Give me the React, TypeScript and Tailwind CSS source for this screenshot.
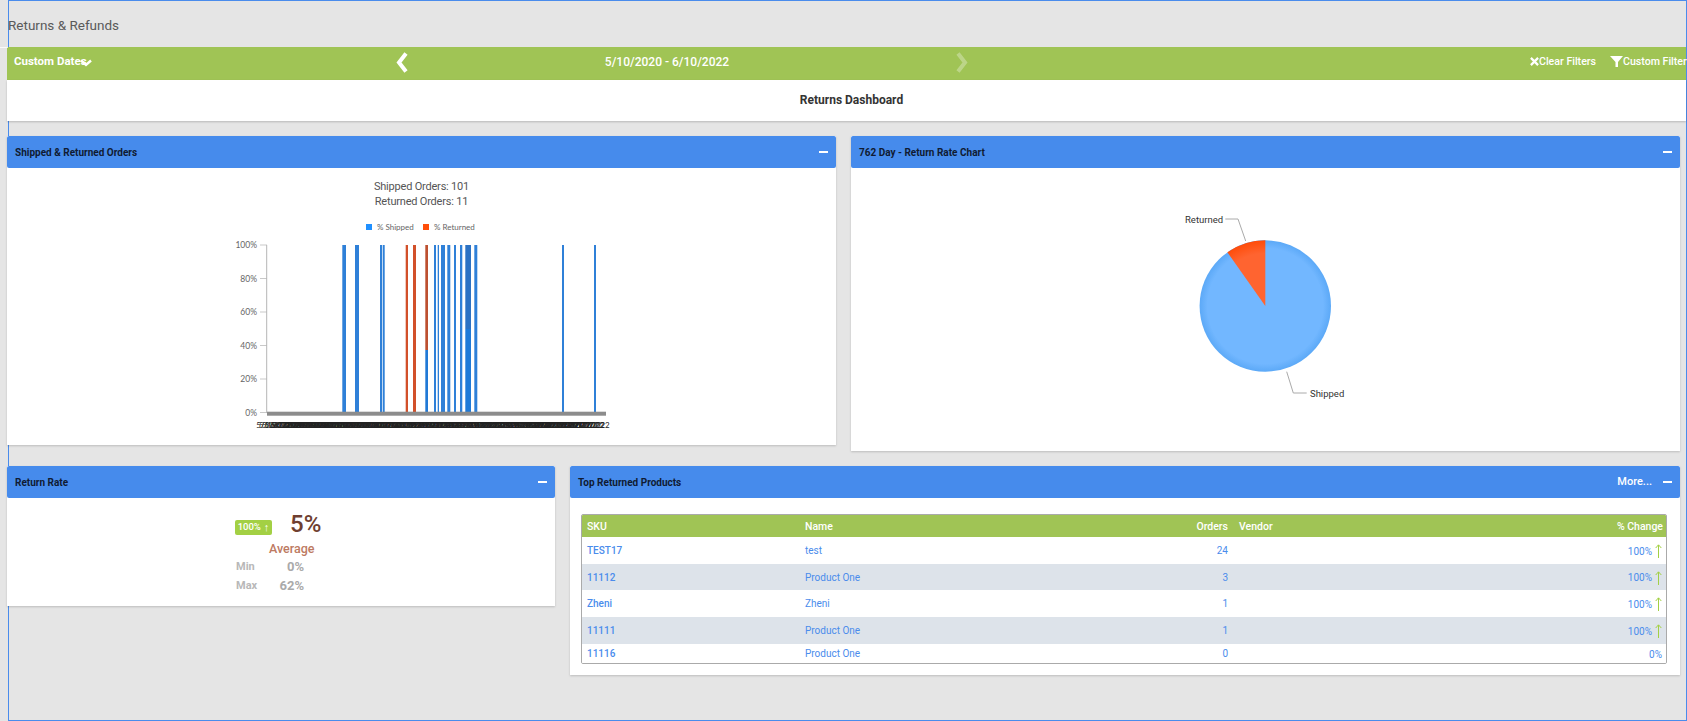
import React from 'react';

const font = { fontFamily: 'Roboto, "Liberation Sans", sans-serif' };

const shippedBars = [
    [342.3, 3.7], [355, 4], [380, 2.3], [383, 1.7], [434, 2], [437.7, 1.3], [441, 4], [447.3, 3],
    [454, 2], [460, 2.3], [474.3, 3], [562, 2], [594, 2],
];
const returnedBars = [[405.7, 2.3], [413, 3]];

const startDate = new Date(2020, 4, 10);
const axisLabels = Array.from({ length: 110 }, (_, i) => {
    const d = new Date(startDate.getTime() + i * 7 * 86400000);
    return { x: 276 + i * 2.88, label: `${d.getMonth() + 1}/${d.getDate()}/${d.getFullYear()}` };
});

const rows = [
    { sku: 'TEST17', name: 'test', orders: 24, change: '100%', up: true, h: 'h-[27px]', bg: 'bg-white' },
    { sku: '11112', name: 'Product One', orders: 3, change: '100%', up: true, h: 'h-[26px]', bg: 'bg-[#dde3ea]' },
    { sku: 'Zheni', name: 'Zheni', orders: 1, change: '100%', up: true, h: 'h-[27px]', bg: 'bg-white' },
    { sku: '11111', name: 'Product One', orders: 1, change: '100%', up: true, h: 'h-[27px]', bg: 'bg-[#dde3ea]' },
    { sku: '11116', name: 'Product One', orders: 0, change: '0%', up: false, h: 'h-[19px]', bg: 'bg-white' },
];

const Chevron = ({ flip, faded }: { flip?: boolean; faded?: boolean }) => (
    <svg width="12" height="21" viewBox="0 0 12 21" className={`shrink-0 ${flip ? 'rotate-180' : ''} ${faded ? 'opacity-30' : ''}`}>
        <path d="M10 1.5 L3 10.5 L10 19.5" fill="none" stroke="#fff" strokeWidth="4" />
    </svg>
);

const UpArrow = () => (
    <svg width="7" height="14" viewBox="0 0 7 14" className="shrink-0">
        <path d="M3.5 14 V1 M0.7 4 L3.5 0.8 L6.3 4" fill="none" stroke="#a3d044" strokeWidth="1" />
    </svg>
);

const PanelHeader = ({ title, more }: { title: string; more?: boolean }) => (
    <div className="flex h-[32px] items-center rounded-[2px] bg-[#468bec] pl-[8px] pr-[8px]">
        <span className="text-[10px] font-bold text-[#101b33]">{title}</span>
        {more && <span className="ml-auto mr-[11px] text-[11px] font-medium text-white">More...</span>}
        <span className={`h-[2px] w-[9px] bg-white ${more ? '' : 'ml-auto'}`} />
    </div>
);

const Panel = ({ title, more, className, children }: { title: string; more?: boolean; className: string; children?: React.ReactNode }) => (
    <section className={`bg-white shadow-[0_1px_2px_rgba(0,0,0,0.18)] ${className}`}>
        <PanelHeader title={title} more={more} />
        {children}
    </section>
);

const BarChart = () => (
    <svg viewBox="7 231 829 200" width="829" height="200" className="block">
        {[100, 80, 60, 40, 20, 0].map((p, i) => {
            const y = 245 + i * 33.5;
            return (
                <g key={p}>
                    <text x="257" y={y + 3} textAnchor="end" fontSize="8.5" fill="#666" fontFamily="Lato, sans-serif">{p}%</text>
                    <line x1="260" x2="267" y1={y} y2={y} stroke="#bbb" strokeWidth="0.8" />
                </g>
            );
        })}
        <line x1="266.7" x2="266.7" y1="245" y2="413" stroke="#b5b5b5" strokeWidth="1" />
        {shippedBars.map(([x, w]) => (
            <rect key={x} x={x} y="245" width={w} height="168" fill="#2f80d8" />
        ))}
        {returnedBars.map(([x, w]) => (
            <rect key={x} x={x} y="245" width={w} height="168" fill="#d2502a" />
        ))}
        <rect x="425.3" y="245" width="2.7" height="105" fill="#bd5030" />
        <rect x="425.3" y="350" width="2.7" height="63" fill="#2179d6" />
        <rect x="465.3" y="245" width="5.7" height="84" fill="#2c72c4" />
        <rect x="465.3" y="329" width="5.7" height="84" fill="#1f7ad8" />
        <rect x="267" y="411.7" width="339" height="4" fill="#8c8c8c" />
        {axisLabels.map((t) => (
            <text key={t.x} x={t.x} y="428" textAnchor="middle" fontSize="8" fill="#222" fontFamily="Lato, sans-serif">
                {t.label}
            </text>
        ))}
    </svg>
);

const PieChart = () => (
    <svg viewBox="851 168 829 283" width="829" height="283" className="block">
        <defs>
            <radialGradient id="pieBlue" gradientUnits="userSpaceOnUse" cx="1265.3" cy="306" r="65.7">
                <stop offset="0.88" stopColor="#72b7ff" />
                <stop offset="1" stopColor="#5ca9f7" />
            </radialGradient>
            <radialGradient id="pieRed" gradientUnits="userSpaceOnUse" cx="1265.3" cy="306" r="65.7">
                <stop offset="0.8" stopColor="#ff6430" />
                <stop offset="1" stopColor="#ff4c0a" />
            </radialGradient>
        </defs>
        <circle cx="1265.3" cy="306" r="65.7" fill="url(#pieBlue)" />
        <path d="M1265.3 306 L1265.3 240.3 A65.7 65.7 0 0 0 1227.4 252.3 Z" fill="url(#pieRed)" />
        <path d="M1225.3 219 H1238 L1245.7 241" fill="none" stroke="#aaa" strokeWidth="1" />
        <path d="M1286.7 371.7 L1293.3 393 H1306.7" fill="none" stroke="#aaa" strokeWidth="1" />
        <text x="1185" y="223" fontSize="9.5" fill="#333" fontFamily="Roboto, sans-serif">Returned</text>
        <text x="1310" y="397" fontSize="9.5" fill="#333" fontFamily="Roboto, sans-serif">Shipped</text>
    </svg>
);

const ReturnRate = () => (
    <div className="h-[108px]">
        <div className="flex items-start pl-[228px] pt-[22px]">
            <span className="flex h-[15px] w-[37px] items-center justify-center gap-[3px] rounded-[2px] bg-[#a3d044] text-[9.5px] font-medium text-white">
                100% <span className="text-[11px] leading-[11px]">↑</span>
            </span>
            <span className="ml-[18px] -mt-[10px] text-[24px] font-medium leading-[28px] text-[#6f3f30]">5%</span>
        </div>
        <div className="mt-[3px] pl-[262px] text-[12.5px] font-medium leading-[16px] text-[#bd7a62]">Average</div>
        <div className="grid w-[297px] grid-cols-[1fr_auto] items-center pl-[229px] text-[#aaa]">
            <span className="text-[11px] font-bold leading-[19px] text-[#b8b8b8]">Min</span>
            <span className="text-right text-[13px] font-bold leading-[19px]">0%</span>
            <span className="text-[11px] font-bold leading-[19px] text-[#b8b8b8]">Max</span>
            <span className="text-right text-[13px] font-bold leading-[19px]">62%</span>
        </div>
    </div>
);

const ProductsTable = () => (
    <div className="ml-[11px] mt-[16px] w-[1086px] overflow-hidden rounded-[2px] border border-[#aaaaaa] text-[10px] text-[#4a8cec]">
        <div className="grid h-[22px] grid-cols-[217px_371px_64px_1fr_166px] items-center bg-[#a0c455] pt-[2px] text-[10.5px] font-medium text-white">
            <span className="pl-[5px]">SKU</span>
            <span className="pl-[6px]">Name</span>
            <span className="pr-[6px] text-right">Orders</span>
            <span className="pl-[5px]">Vendor</span>
            <span className="pr-[3px] text-right">% Change</span>
        </div>
        {rows.map((r) => (
            <div key={r.sku} className={`grid grid-cols-[217px_371px_64px_1fr_166px] items-center ${r.h} ${r.bg}`}>
                <span className="pl-[5px] font-medium">{r.sku}</span>
                <span className="pl-[6px]">{r.name}</span>
                <span className="pr-[6px] text-right">{r.orders}</span>
                <span />
                <span className="flex items-center justify-end gap-[3px] pr-[4px] pt-[1px]">
                    {r.change}
                    {r.up && <UpArrow />}
                </span>
            </div>
        ))}
    </div>
);

export default function App() {
    return (
        <div className="flex h-[721px] w-full overflow-hidden bg-[#e5e5e5]" style={font}>
            <div className="w-[8px] shrink-0 pt-[47px]">
                <div className="h-px bg-white opacity-80" />
            </div>
            <div className="h-full min-w-0 flex-1 border border-[#4a8cec]">
                <div className="-ml-[2px]">
                    <h1 className="flex h-[46px] items-center pl-px pt-[2px] text-[13.5px] font-normal text-[#5a5a5a]">Returns &amp; Refunds</h1>

                    <div className="flex h-[33px] items-center whitespace-nowrap bg-[#a0c455] pb-[3px] text-white">
                        <div className="flex w-[389px] shrink-0 items-center pl-[7px] text-[11.5px] font-bold">
                            Custom Dates
                            <svg width="12" height="8" viewBox="0 0 12 8" className="-ml-[7px] mt-[1px]">
                                <path d="M1 1.5 L6 6 L11 1.5" fill="none" stroke="#fff" strokeWidth="2.4" />
                            </svg>
                        </div>
                        <Chevron />
                        <div className="w-[518px] shrink-0 text-center text-[12px] font-medium">5/10/2020 - 6/10/2022</div>
                        <div className="ml-[30px]"><Chevron flip faded /></div>
                        <div className="ml-[562px] flex shrink-0 items-center text-[10.6px] font-medium">
                            <svg width="9" height="9" viewBox="0 0 8 8" className="shrink-0">
                                <path d="M0.8 0.8 L7.2 7.2 M7.2 0.8 L0.8 7.2" stroke="#fff" strokeWidth="2" />
                            </svg>
                            <span>Clear Filters</span>
                            <svg width="13" height="11" viewBox="0 0 13 11" className="ml-[14px] shrink-0">
                                <path d="M0 0 H13 L8 6 V11 H5.5 V6 Z" fill="#fff" />
                            </svg>
                            <span>Custom Filter</span>
                        </div>
                    </div>

                    <div className="flex h-[41px] items-center justify-center bg-white pb-[1px] pl-[10px] text-[12px] font-bold text-[#333] shadow-[0_1px_2px_rgba(0,0,0,0.2)]">
                        Returns Dashboard
                    </div>

                    <div className="pr-[6px] pt-[15px]">
                        <div className="grid grid-cols-[829px_829px] items-start gap-x-[15px]">
                            <Panel title="Shipped & Returned Orders" className="h-[309px]">
                                <div className="pt-[11px] text-center text-[11px] leading-[15px] tracking-[-0.2px] text-[#555]">
                                    <p>Shipped Orders: 101</p>
                                    <p>Returned Orders: 11</p>
                                </div>
                                <div className="mt-[13px] flex h-[9px] items-center whitespace-nowrap pl-[359px] text-[8px] text-[#666]" style={{ fontFamily: 'Lato, sans-serif' }}>
                                    <span className="mr-[5px] h-[6px] w-[6px] bg-[#2090ff]" />
                                    <span className="mr-[9px] w-[37px]">% Shipped</span>
                                    <span className="mr-[5px] h-[6px] w-[6px] bg-[#ff4e0a]" />
                                    <span>% Returned</span>
                                </div>
                                <BarChart />
                            </Panel>
                            <Panel title="762 Day - Return Rate Chart" className="h-[315px]">
                                <PieChart />
                            </Panel>
                        </div>

                        <div className="mt-[15px] grid grid-cols-[548px_1110px] items-start gap-x-[15px]">
                            <Panel title="Return Rate" className="h-[140px]">
                                <ReturnRate />
                            </Panel>
                            <Panel title="Top Returned Products" more className="h-[209px]">
                                <ProductsTable />
                            </Panel>
                        </div>
                    </div>
                </div>
            </div>
        </div>
    );
}
